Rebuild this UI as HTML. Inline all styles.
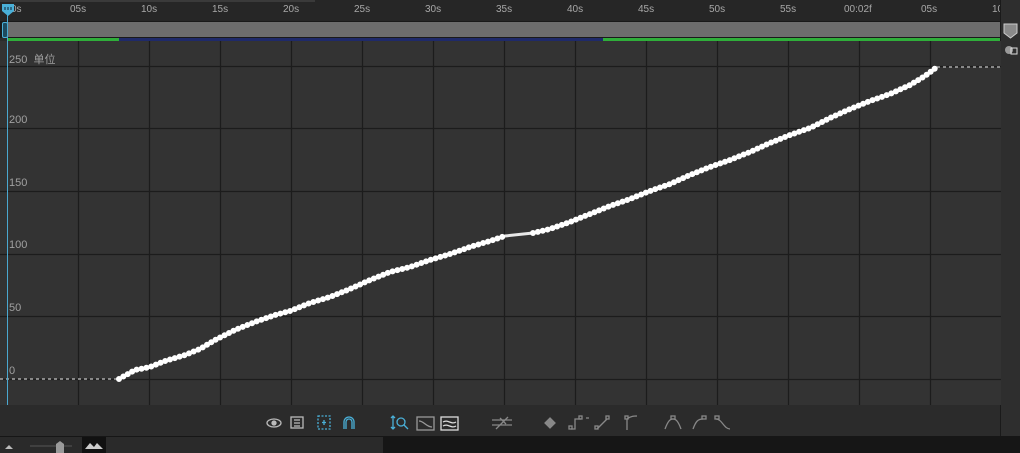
<!DOCTYPE html>
<html><head><meta charset="utf-8"><style>
html,body{margin:0;padding:0;width:1020px;height:453px;overflow:hidden;background:#2b2b2b;font-family:"Liberation Sans","Noto Sans CJK SC",sans-serif;}
.abs{position:absolute}
.lbl{position:absolute;color:#a8a8a8;font-size:10px;}
.yl{position:absolute;color:#a0a0a0;font-size:11px;left:9px}
</style></head><body>
<div class="abs" style="left:0;top:0;width:1020px;height:453px;background:#2b2b2b"></div>
<div class="abs" style="left:0;top:0;width:1001px;height:21px;background:#262626"></div>
<div class="abs" style="left:0;top:0;width:315px;height:2px;background:#3a3a3a"></div>
<div class="lbl" style="left:11px;top:4px">0s</div>
<div class="lbl" style="left:70px;top:4px">05s</div>
<div class="lbl" style="left:141px;top:4px">10s</div>
<div class="lbl" style="left:212px;top:4px">15s</div>
<div class="lbl" style="left:283px;top:4px">20s</div>
<div class="lbl" style="left:354px;top:4px">25s</div>
<div class="lbl" style="left:425px;top:4px">30s</div>
<div class="lbl" style="left:496px;top:4px">35s</div>
<div class="lbl" style="left:567px;top:4px">40s</div>
<div class="lbl" style="left:638px;top:4px">45s</div>
<div class="lbl" style="left:709px;top:4px">50s</div>
<div class="lbl" style="left:780px;top:4px">55s</div>
<div class="lbl" style="left:844px;top:4px">00:02f</div>
<div class="lbl" style="left:921px;top:4px">05s</div>
<div class="lbl" style="left:992px;top:4px">10</div>
<div class="abs" style="left:0;top:21px;width:1001px;height:17px;background:#1a1a1a"></div>
<div class="abs" style="left:7px;top:22px;width:994px;height:15px;background:#6d6d6d"></div>
<div class="abs" style="left:7px;top:38px;width:994px;height:3px;background:#2fae3a"></div>
<div class="abs" style="left:119px;top:38px;width:484px;height:3px;background:#1f2a6a"></div>
<div class="abs" style="left:2px;top:22px;width:4px;height:14px;border:1px solid #4ab0d8;border-radius:2px;background:#1d4a5e"></div>
<div class="abs" style="left:1001px;top:0;width:19px;height:436px;background:#2e2e2e"></div>
<div class="abs" style="left:1000px;top:0;width:1px;height:436px;background:#1a1a1a"></div>
<svg class="abs" style="left:1003px;top:22px" width="16" height="40"><path d="M1 2H14V11L7.5 16L1 11Z" fill="#8a8a8a" stroke="#ccc"/><circle cx="6" cy="28" r="4" fill="#999"/><rect x="8" y="26" width="6" height="6" fill="none" stroke="#ddd"/></svg>
<svg class="abs" style="left:0;top:41px" width="1001" height="364">
<rect width="1001" height="364" fill="#333333"/>
<g stroke="#1c1c1c" stroke-width="1.2">
<line x1="78.5" y1="0" x2="78.5" y2="364"/><line x1="149.5" y1="0" x2="149.5" y2="364"/><line x1="220.5" y1="0" x2="220.5" y2="364"/><line x1="291.5" y1="0" x2="291.5" y2="364"/><line x1="362.5" y1="0" x2="362.5" y2="364"/><line x1="433.5" y1="0" x2="433.5" y2="364"/><line x1="504.5" y1="0" x2="504.5" y2="364"/><line x1="575.5" y1="0" x2="575.5" y2="364"/><line x1="646.5" y1="0" x2="646.5" y2="364"/><line x1="717.5" y1="0" x2="717.5" y2="364"/><line x1="788.5" y1="0" x2="788.5" y2="364"/><line x1="859.5" y1="0" x2="859.5" y2="364"/><line x1="930.5" y1="0" x2="930.5" y2="364"/>
<line x1="0" y1="25.5" x2="1001" y2="25.5"/><line x1="0" y1="87.5" x2="1001" y2="87.5"/><line x1="0" y1="150.5" x2="1001" y2="150.5"/><line x1="0" y1="213.5" x2="1001" y2="213.5"/><line x1="0" y1="275.5" x2="1001" y2="275.5"/><line x1="0" y1="338.5" x2="1001" y2="338.5"/>
</g>
<g stroke="#aaa" stroke-width="1.5" stroke-dasharray="3 3"><line x1="0" y1="338" x2="119" y2="338"/><line x1="937" y1="26" x2="1001" y2="26"/></g>
<path d="M119 338 L135 329 L150 326 L165 320 L185 314 L200 308 L215 299 L235 289 L255 281 L275 274 L290 270 L310 262 L330 256 L350 248 L370 239 L390 231 L410 226 L430 219 L450 213 L470 206 L490 200 L505 195 L533 192 L550 188 L570 181 L590 173 L610 165 L630 158 L650 150 L670 143 L690 134 L710 126 L730 119 L750 111 L770 102 L790 94 L810 87 L830 77 L850 68 L870 60 L890 53 L910 44 L925 35 L937 26" fill="none" stroke="#e8e8e8" stroke-width="3"/>
<path d="M119 338 L135 329 L150 326 L165 320 L185 314 L200 308 L215 299 L235 289 L255 281 L275 274 L290 270 L310 262 L330 256 L350 248 L370 239 L390 231 L410 226 L430 219 L450 213 L470 206 L490 200 L505 195" fill="none" stroke="#fff" stroke-width="6" stroke-linecap="round" stroke-dasharray="0 5"/>
<path d="M533 192 L550 188 L570 181 L590 173 L610 165 L630 158 L650 150 L670 143 L690 134 L710 126 L730 119 L750 111 L770 102 L790 94 L810 87 L830 77 L850 68 L870 60 L890 53 L910 44 L925 35 L937 26" fill="none" stroke="#fff" stroke-width="6" stroke-linecap="round" stroke-dasharray="0 5"/>
</svg>
<div class="yl" style="top:51px">250&nbsp; 单位</div>
<div class="yl" style="top:114px">200</div>
<div class="yl" style="top:177px">150</div>
<div class="yl" style="top:239px">100</div>
<div class="yl" style="top:302px">50</div>
<div class="yl" style="top:365px">0</div>
<div class="abs" style="left:7px;top:12px;width:1px;height:393px;background:#4aa8d0"></div>
<svg class="abs" style="left:1px;top:3px" width="14" height="14"><path d="M1 1H13V8L7 13L1 8Z" fill="#4ab0d8"/><path d="M4 4V7M7 4V7M10 4V7" stroke="#123" stroke-width="1"/></svg>
<svg class="abs" style="left:260px;top:412px" width="500" height="22" fill="none" stroke="#bbb" stroke-width="1.3">
<ellipse cx="14" cy="11" rx="7" ry="4"/><circle cx="14" cy="11" r="2" fill="#bbb"/>
<rect x="31" y="5" width="12" height="11"/><path d="M34 8h6M34 11h6M34 14h6"/>
<g stroke="#4ab0d8"><rect x="58" y="4" width="12" height="13" stroke-dasharray="2 1.5"/><path d="M64 8v5M62 10.5h4"/>
<path d="M84 17v-7a5 5 0 0 1 10 0v7M86 17v-7a3 3 0 0 1 6 0v7"/>
<path d="M133 4v13M131 6l2-2 2 2M131 15l2 2 2-2"/><circle cx="141" cy="10" r="4"/><path d="M144 13l4 4"/></g>
<rect x="157" y="5" width="17" height="13" stroke="#999"/><path d="M159 9c5 0 7 6 13 6" stroke="#999"/>
<rect x="181" y="5" width="17" height="13" stroke="#ddd"/><path d="M183 10c5-3 8 3 13 0M183 14c5-3 8 3 13 0" stroke="#ddd"/>
<g stroke="#888"><path d="M232 8h20M232 13h20M236 17l12-12M240 6l6 6"/>
<path d="M290 6l5 5-5 5-5-5z" fill="#888"/><path d="M311 17h4v-10h6M326 6h3"/><rect x="309" y="14" width="3" height="3"/><rect x="319" y="4" width="3" height="3"/>
<path d="M337 17l10-10"/><rect x="335" y="14" width="3" height="3"/><rect x="346" y="4" width="3" height="3"/>
<path d="M367 18v-11c4-3 7-3 10-3"/><rect x="365" y="4" width="3" height="3"/>
<path d="M405 17c3-8 5-10 8-10c3 0 5 2 8 10"/><rect x="411" y="4" width="4" height="3"/>
<path d="M433 17c3-8 5-10 10-10"/><rect x="442" y="4" width="4" height="3"/>
<path d="M456 7c6 0 8 10 14 10"/><rect x="455" y="4" width="4" height="3"/></g>
</svg>
<div class="abs" style="left:0;top:436px;width:1020px;height:17px;background:#161616"></div>
<div class="abs" style="left:0;top:437px;width:383px;height:16px;background:#2a2a2a"></div>
<svg class="abs" style="left:0;top:437px" width="110" height="16">
<path d="M5 12l4-4 4 4z" fill="#bbb"/><line x1="30" y1="9" x2="72" y2="9" stroke="#555"/><path d="M56 16v-9l4-3 4 3v9z" fill="#999"/>
<rect x="82" y="0" width="24" height="16" fill="#111"/><path d="M85 12l5-6 4 4 3-4 6 6z" fill="#ccc"/>
</svg>
</body></html>
